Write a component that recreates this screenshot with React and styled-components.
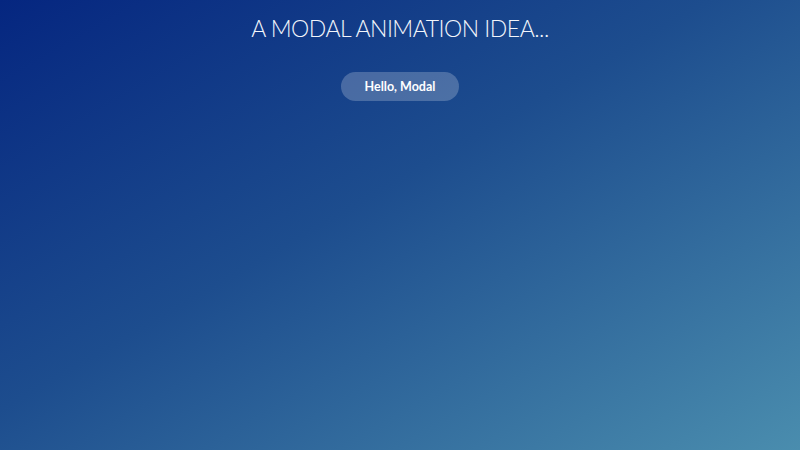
import React from "react";
import styled, { createGlobalStyle } from "styled-components";

const GlobalStyle = createGlobalStyle`
  html, body { margin: 0; padding: 0; height: 100%; }
  body { font-family: Lato, "Open Sans", sans-serif; }
  #root { height: 100%; }
`;

const Page = styled.main`
  height: 100vh;
  box-sizing: border-box;
  background: linear-gradient(150deg, #052680 0%, #1d4d8e 45%, #4a8dae 100%);
  display: flex;
  flex-direction: column;
  align-items: center;
  padding-top: 13px;
`;

const Title = styled.h1`
  margin: 0;
  color: #f2f5fb;
  font-family: Lato, sans-serif;
  font-weight: 300;
  font-size: 23px;
  letter-spacing: -0.5px;
  line-height: 30px;
`;

const Button = styled.button`
  margin-top: 29px;
  width: 118px;
  height: 29px;
  border: none;
  border-radius: 15px;
  background: rgba(255, 255, 255, 0.22);
  color: #fff;
  font-family: Lato, sans-serif;
  font-weight: 700;
  font-size: 12.5px;
  cursor: pointer;
`;

export default function App() {
  return (
    <>
      <GlobalStyle />
      <Page>
        <Title>A MODAL ANIMATION IDEA...</Title>
        <Button>Hello, Modal</Button>
      </Page>
    </>
  );
}
